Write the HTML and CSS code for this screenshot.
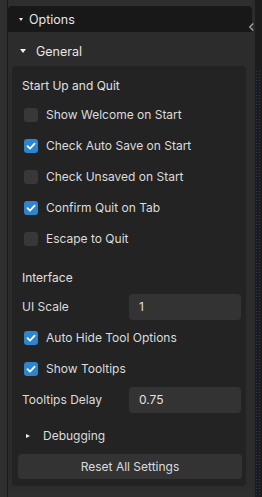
FILE: index.html
```html
<!DOCTYPE html>
<html lang="en">

<head>
    <meta charset="UTF-8">
    <meta name="viewport" content="width=device-width, initial-scale=1.0">
    <title>Options</title>
    <link rel="stylesheet" href="styles.css">
</head>

<body>
    <div class="app">
        <div class="side"></div>

        <div class="region">
            <div class="panel">
                <div class="panel-head"><span class="tri down"></span>Options</div>

                <div class="panel-body">
                    <div class="sub-head"><span class="tri down big"></span>General</div>

                    <div class="box">
                        <div class="title">Start Up and Quit</div>
                        <label class="check"><span class="cb"></span>Show Welcome on Start</label>
                        <label class="check"><span class="cb on"><svg viewBox="0 0 14 14"><polyline points="3.5,7.2 6,9.6 10.6,4.6" /></svg></span>Check Auto Save on Start</label>
                        <label class="check"><span class="cb"></span>Check Unsaved on Start</label>
                        <label class="check"><span class="cb on"><svg viewBox="0 0 14 14"><polyline points="3.5,7.2 6,9.6 10.6,4.6" /></svg></span>Confirm Quit on Tab</label>
                        <label class="check"><span class="cb"></span>Escape to Quit</label>

                        <div class="title gap">Interface</div>
                        <div class="field-row">
                            <span class="label">UI Scale</span>
                            <span class="field">1</span>
                        </div>
                        <label class="check"><span class="cb on"><svg viewBox="0 0 14 14"><polyline points="3.5,7.2 6,9.6 10.6,4.6" /></svg></span>Auto Hide Tool Options</label>
                        <label class="check"><span class="cb on"><svg viewBox="0 0 14 14"><polyline points="3.5,7.2 6,9.6 10.6,4.6" /></svg></span>Show Tooltips</label>
                        <div class="field-row">
                            <span class="label">Tooltips Delay</span>
                            <span class="field">0.75</span>
                        </div>

                        <div class="fold"><span class="tri right"></span>Debugging</div>
                        <button class="btn">Reset All Settings</button>
                    </div>
                </div>
            </div>
        </div>

        <div class="gutter"></div>
        <div class="edge"><div class="dots"></div></div>

        <svg class="chevron" viewBox="0 0 8 10"><polyline points="6,1 2,5 6,9" /></svg>
    </div>
</body>

</html>
```

FILE: styles.css
```css
body {
    margin: 0;
    background-color: #2e2e2e;
    font-family: Inter, "DejaVu Sans", sans-serif;
    font-size: 12px;
    color: #dcdcdc;
}

.app {
    display: flex;
    height: 497px;
    position: relative;
    overflow: hidden;
}

.side {
    width: 7px;
    background-color: #2e2e2e;
    border-right: 1px solid #1a1a1a;
}

.region {
    width: 244px;
    padding-top: 6px;
    background-color: #2e2e2e;
}

.gutter {
    width: 3px;
    background-color: #2b2b2b;
}

.edge {
    width: 7px;
    background-color: #1c1c1c;
}

.dots {
    margin-top: 70px;
    height: 427px;
    background-image: radial-gradient(circle, #26395c 0.8px, transparent 1px);
    background-size: 3px 3px;
}

.chevron {
    position: absolute;
    left: 248px;
    top: 22px;
    width: 7px;
    height: 10px;
    fill: none;
    stroke: #a0a0a0;
    stroke-width: 1.6;
}

.panel {
    display: flex;
    flex-direction: column;
}

.panel-head {
    height: 26px;
    display: flex;
    align-items: center;
    padding-left: 11px;
    background-color: #181818;
    border-radius: 4px 4px 0 0;
    color: #e6e6e6;
    font-size: 12.5px;
}

.panel-body {
    background-color: #2c2c2c;
    padding: 0 6px 4px 4px;
    border-radius: 0 0 4px 4px;
}

.sub-head {
    height: 34px;
    box-sizing: border-box;
    padding: 4px 0 0 8px;
    display: flex;
    align-items: center;
    color: #e6e6e6;
    font-size: 12.5px;
}

.tri {
    display: inline-block;
    width: 0;
    height: 0;
}

.tri.down {
    border-left: 2.5px solid transparent;
    border-right: 2.5px solid transparent;
    border-top: 3.5px solid #f0f0f0;
    margin-right: 6px;
}

.tri.down.big {
    border-left-width: 3px;
    border-right-width: 3px;
    border-top-width: 4px;
    margin-right: 10px;
}

.tri.right {
    border-top: 2.5px solid transparent;
    border-bottom: 2.5px solid transparent;
    border-left: 4px solid #f0f0f0;
    margin-right: 13px;
}

.box {
    background-color: #232323;
    border-radius: 4px;
    padding: 5px 5px 7px 6px;
    display: flex;
    flex-direction: column;
}

.title {
    height: 28px;
    display: flex;
    align-items: center;
    padding-left: 4px;
    color: #e0e0e0;
}

.title.gap {
    margin-top: 9px;
}

.check {
    height: 31px;
    display: flex;
    align-items: center;
    padding-left: 6px;
}

.cb {
    width: 14px;
    height: 14px;
    border-radius: 3px;
    background-color: #383838;
    margin-right: 8px;
    display: flex;
}

.cb.on {
    background-color: #2b86cf;
}

.cb svg {
    width: 14px;
    height: 14px;
    fill: none;
    stroke: #ffffff;
    stroke-width: 1.8;
    stroke-linecap: round;
    stroke-linejoin: round;
}

.field-row {
    display: grid;
    grid-template-columns: 111px 1fr;
    align-items: center;
    height: 31px;
}

.label {
    padding-left: 4px;
}

.field {
    height: 26px;
    display: flex;
    align-items: center;
    padding-left: 10px;
    background-color: #333333;
    border-radius: 4px;
    color: #e0e0e0;
}

.fold {
    height: 31px;
    margin-top: 5px;
    display: flex;
    align-items: center;
    padding-left: 8px;
}

.btn {
    margin-top: 3px;
    height: 25px;
    margin-right: -1px;
    background-color: #333333;
    border: none;
    border-radius: 4px;
    color: #dcdcdc;
    font-family: inherit;
    font-size: 12px;
}
```
